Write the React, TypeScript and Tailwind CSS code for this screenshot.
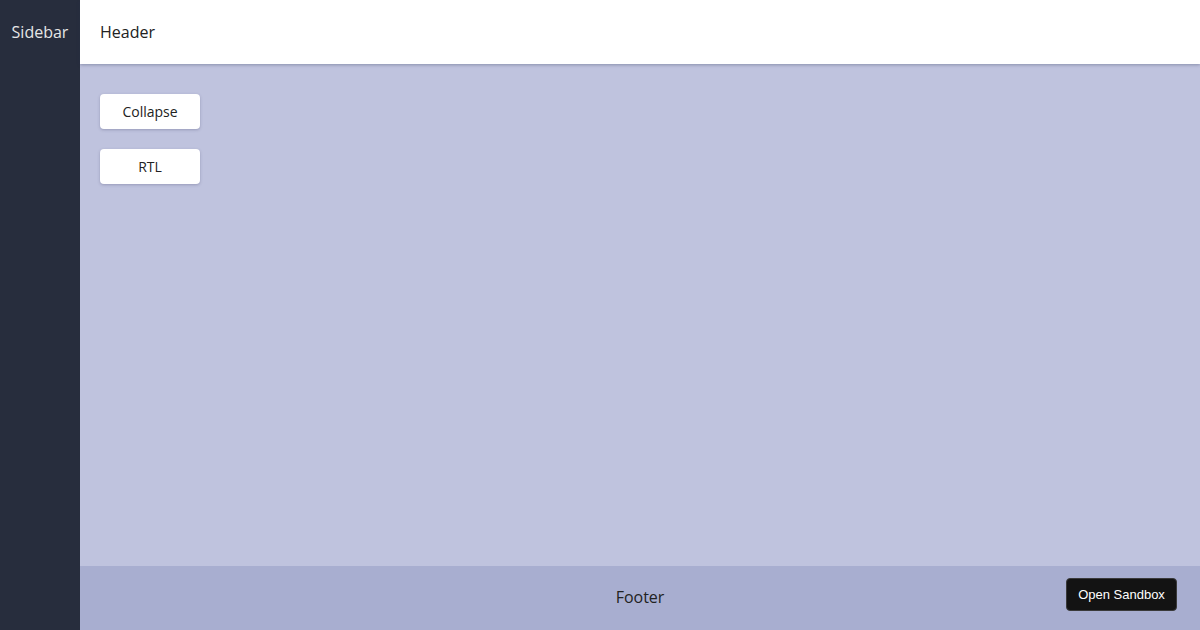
export default function App() {
  return (
    <div className="relative flex h-[630px] w-full font-['Open_Sans',sans-serif]">
      <aside className="flex w-[80px] shrink-0 flex-col bg-[#272d3d] text-[#e6e6e6]">
        <div className="flex h-[64px] items-center justify-center text-[16px]">Sidebar</div>
      </aside>
      <div className="flex min-w-0 flex-1 flex-col bg-[#bfc3de]">
        <header className="relative z-10 flex h-[64px] shrink-0 items-center bg-white px-5 text-[16px] text-[#222] shadow-[0_1px_3px_rgba(40,45,80,0.35)]">
          Header
        </header>
        <main className="flex flex-1 flex-col items-start gap-5 p-5 pt-[30px]">
          <button className="h-[35px] w-[100px] rounded bg-white text-[14px] text-[#222] shadow-[0_1px_3px_rgba(60,60,100,0.3)]">
            Collapse
          </button>
          <button className="h-[35px] w-[100px] rounded bg-white text-[14px] text-[#222] shadow-[0_1px_3px_rgba(60,60,100,0.3)]">
            RTL
          </button>
        </main>
        <footer className="flex h-[64px] shrink-0 items-center justify-center bg-[#a8aed0] pb-[2px] text-[16px] text-[#222]">
          Footer
        </footer>
      </div>
      <button className="absolute bottom-[19px] right-[23px] h-[33px] w-[111px] rounded border border-[#3a3a3a] bg-[#131313] font-['Liberation_Sans',Arial,sans-serif] text-[13px] text-white">
        Open Sandbox
      </button>
    </div>
  );
}
